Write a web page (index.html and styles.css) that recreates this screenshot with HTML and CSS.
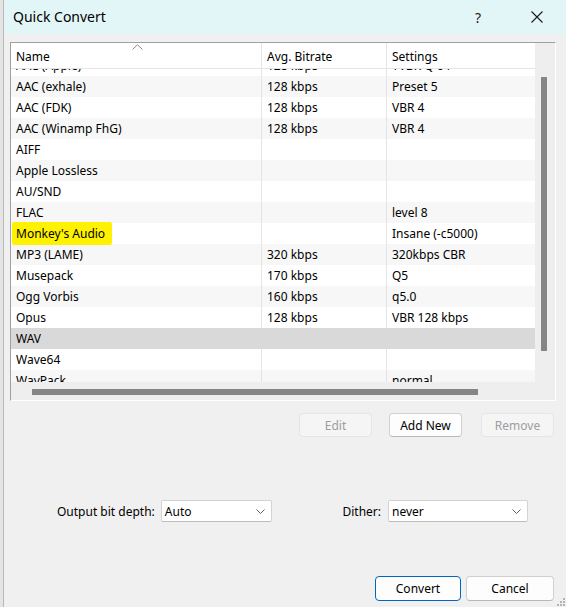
FILE: index.html
```html
<!DOCTYPE html>
<html lang="en">
<head>
    <meta charset="UTF-8">
    <meta name="viewport" content="width=device-width, initial-scale=1.0">
    <title>Quick Convert</title>
    <link rel="stylesheet" href="styles.css">
</head>
<body>
    <div class="window">
        <!-- Barra de título -->
        <div class="titlebar">
            <span class="title">Quick Convert</span>
            <span class="help">?</span>
            <span class="close">
                <svg width="14" height="14" viewBox="0 0 14 14">
                    <path d="M1.5 1.5 L12.5 12.5 M12.5 1.5 L1.5 12.5" stroke="#1a1a1a" stroke-width="1.1" fill="none"/>
                </svg>
            </span>
        </div>

        <div class="dialog">
            <!-- Lista de codificadores -->
            <div class="list">
                <div class="list-main">
                    <div class="list-head">
                        <div class="cell c-name">Name
                            <svg class="sort" width="11" height="6" viewBox="0 0 11 6">
                                <path d="M0.5 5.5 L5.5 0.8 L10.5 5.5" stroke="#8a8a8a" stroke-width="1" fill="none"/>
                            </svg>
                        </div>
                        <div class="cell c-rate">Avg. Bitrate</div>
                        <div class="cell c-set">Settings</div>
                    </div>
                    <div class="list-body">
                        <div class="rows">
                            <div class="row"><div class="cell c-name">AAC (Apple)</div><div class="cell c-rate">128 kbps</div><div class="cell c-set">TVBR Q 64</div></div>
                            <div class="row alt"><div class="cell c-name">AAC (exhale)</div><div class="cell c-rate">128 kbps</div><div class="cell c-set">Preset 5</div></div>
                            <div class="row"><div class="cell c-name">AAC (FDK)</div><div class="cell c-rate">128 kbps</div><div class="cell c-set">VBR 4</div></div>
                            <div class="row alt"><div class="cell c-name">AAC (Winamp FhG)</div><div class="cell c-rate">128 kbps</div><div class="cell c-set">VBR 4</div></div>
                            <div class="row"><div class="cell c-name">AIFF</div><div class="cell c-rate"></div><div class="cell c-set"></div></div>
                            <div class="row alt"><div class="cell c-name">Apple Lossless</div><div class="cell c-rate"></div><div class="cell c-set"></div></div>
                            <div class="row"><div class="cell c-name">AU/SND</div><div class="cell c-rate"></div><div class="cell c-set"></div></div>
                            <div class="row alt"><div class="cell c-name">FLAC</div><div class="cell c-rate"></div><div class="cell c-set">level 8</div></div>
                            <div class="row"><div class="cell c-name"><span class="marked">Monkey's Audio</span></div><div class="cell c-rate"></div><div class="cell c-set">Insane (-c5000)</div></div>
                            <div class="row alt"><div class="cell c-name">MP3 (LAME)</div><div class="cell c-rate">320 kbps</div><div class="cell c-set">320kbps CBR</div></div>
                            <div class="row"><div class="cell c-name">Musepack</div><div class="cell c-rate">170 kbps</div><div class="cell c-set">Q5</div></div>
                            <div class="row alt"><div class="cell c-name">Ogg Vorbis</div><div class="cell c-rate">160 kbps</div><div class="cell c-set">q5.0</div></div>
                            <div class="row"><div class="cell c-name">Opus</div><div class="cell c-rate">128 kbps</div><div class="cell c-set">VBR 128 kbps</div></div>
                            <div class="row selected"><div class="cell c-name">WAV</div><div class="cell c-rate"></div><div class="cell c-set"></div></div>
                            <div class="row"><div class="cell c-name">Wave64</div><div class="cell c-rate"></div><div class="cell c-set"></div></div>
                            <div class="row alt"><div class="cell c-name">WavPack</div><div class="cell c-rate"></div><div class="cell c-set">normal</div></div>
                        </div>
                    </div>
                    <div class="hscroll"><div class="hthumb"></div></div>
                </div>
                <div class="vscroll"><div class="vthumb"></div></div>
            </div>

            <!-- Botões da lista -->
            <div class="list-buttons">
                <button class="btn" disabled>Edit</button>
                <button class="btn add">Add New</button>
                <button class="btn remove" disabled>Remove</button>
            </div>

            <!-- Opções de saída -->
            <div class="options">
                <div class="field first">
                    <label>Output bit depth:</label>
                    <div class="select depth">
                        <span>Auto</span>
                        <svg width="9" height="5" viewBox="0 0 9 5"><path d="M0.5 0.5 L4.5 4.5 L8.5 0.5" stroke="#606060" stroke-width="1" fill="none"/></svg>
                    </div>
                </div>
                <div class="field">
                    <label>Dither:</label>
                    <div class="select dither">
                        <span>never</span>
                        <svg width="9" height="5" viewBox="0 0 9 5"><path d="M0.5 0.5 L4.5 4.5 L8.5 0.5" stroke="#606060" stroke-width="1" fill="none"/></svg>
                    </div>
                </div>
            </div>

            <!-- Ações -->
            <div class="actions">
                <button class="btn default">Convert</button>
                <button class="btn cancel">Cancel</button>
            </div>
        </div>

        <svg class="grip" width="10" height="10" viewBox="0 0 10 10">
            <rect x="8" y="2" width="2" height="2" fill="#b4b4b4"/>
            <rect x="5" y="5" width="2" height="2" fill="#b4b4b4"/>
            <rect x="8" y="5" width="2" height="2" fill="#b4b4b4"/>
            <rect x="2" y="8" width="2" height="2" fill="#b4b4b4"/>
            <rect x="5" y="8" width="2" height="2" fill="#b4b4b4"/>
            <rect x="8" y="8" width="2" height="2" fill="#b4b4b4"/>
        </svg>
    </div>
</body>
</html>
```

FILE: styles.css
```css
/* Estilo global */
* {
    box-sizing: border-box;
}

body {
    margin: 0;
    width: 566px;
    height: 607px;
    overflow: hidden;
    background: #e4e4e4;
    font-family: 'Noto Sans', 'Liberation Sans', sans-serif;
    font-size: 12px;
    color: #000;
}

/* Janela */
.window {
    position: relative;
    margin-left: 3px;
    height: 607px;
    background: #f0f0f0;
    border-left: 1px solid #b8b8b8;
}

/* Barra de título */
.titlebar {
    height: 34px;
    background: #e3f6f7;
    display: flex;
    align-items: center;
    padding-left: 9px;
}

.title {
    font-size: 14px;
    flex: 1;
    margin-top: -1px;
}

.help {
    font-size: 14px;
    width: 16px;
    margin-right: 39px;
    color: #1a1a1a;
}

.close {
    display: flex;
    margin-right: 22px;
}

/* Conteúdo do diálogo */
.dialog {
    padding: 8px 0 0 6px;
}

/* Lista */
.list {
    display: flex;
    width: 546px;
    height: 359px;
    border-top: 1px solid #a0a0a0;
    border-left: 1px solid #a0a0a0;
    border-right: 1px solid #ffffff;
    border-bottom: 1px solid #ffffff;
}

.list-main {
    width: 524px;
    display: flex;
    flex-direction: column;
}

.list-head {
    display: flex;
    height: 26px;
    background: #fff;
    border-bottom: 1px solid #e5e5e5;
}

.list-head .cell {
    position: relative;
    line-height: 25px;
    padding-top: 1px;
}

.sort {
    position: absolute;
    left: 121px;
    top: 1px;
}

.list-body {
    height: 313px;
    overflow: hidden;
    background: #fff;
}

.rows {
    margin-top: -14px;
}

.row {
    display: flex;
    height: 21px;
    line-height: 21px;
    background: #fff;
}

.row.alt {
    background: #f7f7f7;
}

.row.selected {
    background: #d9d9d9;
}

.row.selected .cell {
    border-color: #d9d9d9;
}

.cell {
    padding-left: 5px;
    white-space: nowrap;
}

.c-name {
    width: 250px;
}

.c-rate {
    width: 125px;
    border-left: 1px solid #e5e5e5;
}

.c-set {
    width: 149px;
    border-left: 1px solid #e5e5e5;
}

/* Realce amarelo */
.marked {
    background: #fff200;
    padding: 3px 7px 3px 4px;
    margin-left: -4px;
    border-radius: 2px;
}

/* Barras de rolagem */
.hscroll {
    height: 18px;
    padding: 7px 0 0 21px;
    background: #eeeeee;
}

.hthumb {
    width: 446px;
    height: 6px;
    background: #858585;
}

.vscroll {
    width: 20px;
    background: #eeeeee;
    padding: 34px 0 0 6px;
}

.vthumb {
    width: 6px;
    height: 274px;
    background: #858585;
}

/* Botões */
.btn {
    font-family: 'Noto Sans', 'Liberation Sans', sans-serif;
    font-size: 12px;
    height: 24px;
    width: 73px;
    padding: 0;
    background: #fdfdfd;
    color: #000;
    border: 1px solid #d0d0d0;
    border-bottom-color: #b8b8b8;
    border-radius: 4px;
}

.btn:disabled {
    background: #f5f5f5;
    color: #9d9d9d;
    border-color: #e5e5e5;
}

.list-buttons {
    display: flex;
    justify-content: flex-end;
    gap: 17px;
    margin-top: 12px;
    padding-right: 12px;
}

.list-buttons .remove {
    margin-left: 2px;
}

/* Opções */
.options {
    display: flex;
    justify-content: space-between;
    align-items: center;
    margin-top: 63px;
    padding: 0 38px 0 47px;
}

.field {
    display: flex;
    align-items: center;
    gap: 7px;
}

.field.first {
    gap: 6px;
}

.select {
    height: 22px;
    background: #fff;
    border: 1px solid #d3d3d3;
    border-bottom-color: #bcbcbc;
    border-radius: 2px;
    display: flex;
    align-items: center;
    justify-content: space-between;
    padding: 0 6px 0 3px;
}

.select.depth {
    width: 111px;
}

.select.dither {
    width: 140px;
}

/* Ações finais */
.actions {
    display: flex;
    justify-content: flex-end;
    gap: 5px;
    margin-top: 54px;
    padding-right: 12px;
}

.actions .btn {
    height: 25px;
}

.btn.default {
    width: 86px;
    border: 1px solid #0067c0;
}

.btn.cancel {
    width: 88px;
}

.grip {
    position: absolute;
    right: 1px;
    bottom: 1px;
}
```
